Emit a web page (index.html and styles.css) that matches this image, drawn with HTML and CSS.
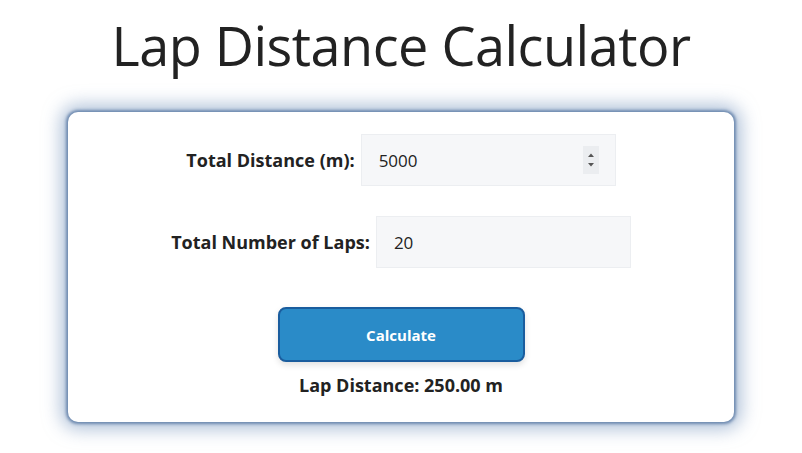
FILE: index.html
```html
<!DOCTYPE html>
<html>
<head>
<meta charset="utf-8">
<link rel="stylesheet" href="styles.css">
</head>
<body>
<h1 class="title">Lap Distance Calculator</h1>
<div class="card">
  <div class="row">
    <label class="label">Total Distance (m):</label>
    <div class="input">
      <span>5000</span>
      <span class="spin">
        <svg width="16" height="28" viewBox="0 0 16 28"><rect width="16" height="28" fill="#ebedf0"/><path d="M5 11 L8 7.5 L11 11 Z" fill="#555"/><path d="M5 17 L8 20.5 L11 17 Z" fill="#555"/></svg>
      </span>
    </div>
  </div>
  <div class="row">
    <label class="label">Total Number of Laps:</label>
    <div class="input"><span>20</span></div>
  </div>
  <button class="btn">Calculate</button>
  <div class="result">Lap Distance: 250.00 m</div>
</div>
</body>
</html>
```
FILE: styles.css
```css
html, body { margin: 0; padding: 0; background: #ffffff; }
body {
  font-family: "Segoe UI", "Open Sans", "Noto Sans", sans-serif;
  color: #222;
  display: flex;
  flex-direction: column;
  align-items: center;
  min-height: 453px;
  box-sizing: border-box;
  padding-bottom: 31px;
}
.title {
  font-weight: 400;
  font-size: 54px;
  margin: 10px 0 0 0;
  height: 102px;
  line-height: 70px;
  letter-spacing: -0.5px;
  color: #222;
}
.card {
  width: 666px;
  height: 310px;
  flex-shrink: 0;
  box-sizing: border-box;
  background: #fff;
  border-radius: 10px;
  box-shadow: 0 0 3px 2px rgba(100,130,170,0.9), 0 0 18px 7px rgba(120,150,190,0.6);
  padding: 22px 0 0 0;
  display: flex;
  flex-direction: column;
  align-items: center;
}
.row {
  display: flex;
  align-items: center;
  gap: 6px;
  height: 52px;
  margin-bottom: 30px;
}
.label {
  font-weight: 700;
  font-size: 18px;
}
.input {
  width: 255px;
  height: 52px;
  box-sizing: border-box;
  background: #f6f7f9;
  border: 1px solid #eceef1;
  padding: 0 16px 0 17px;
  display: flex;
  align-items: center;
  justify-content: space-between;
  font-size: 17px;
  color: #222;
}
.spin { display: flex; }
.btn {
  margin-top: 9px;
  width: 247px;
  height: 55px;
  background: #2a8bc8;
  border: 2px solid #1a5d9e;
  border-radius: 8px;
  color: #fff;
  font-family: inherit;
  font-weight: 700;
  font-size: 15px;
  box-shadow: 0 3px 6px rgba(0,0,0,0.12);
}
.result {
  margin-top: 11px;
  font-weight: 700;
  font-size: 18px;
}
```
